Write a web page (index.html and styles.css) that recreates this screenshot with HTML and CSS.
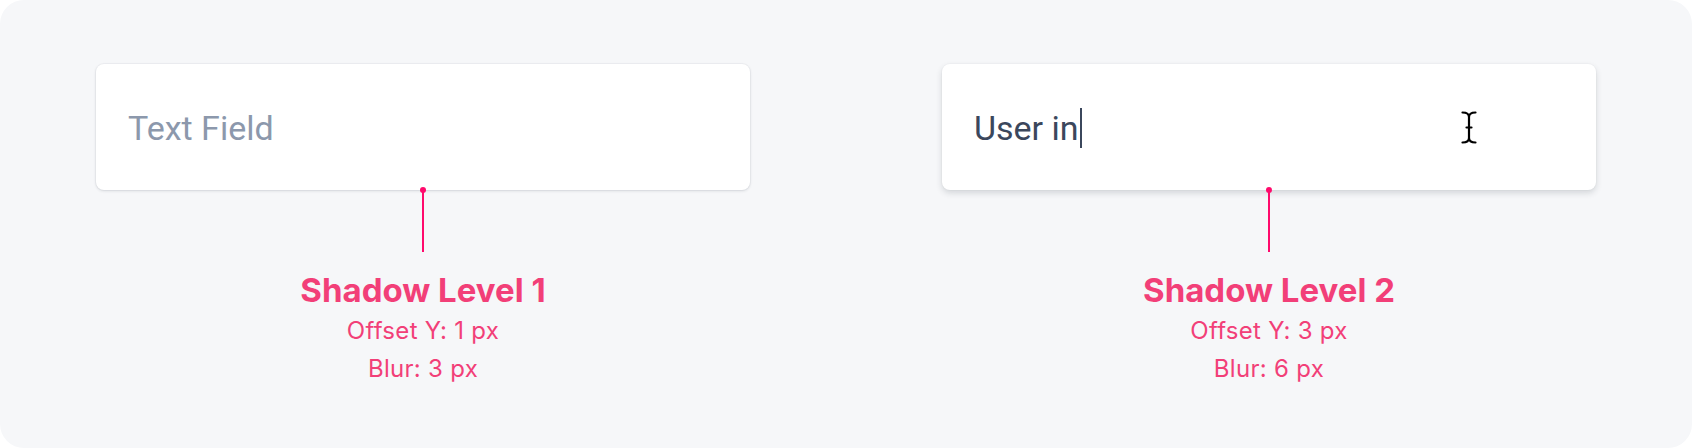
FILE: index.html
```html
<!DOCTYPE html>
<html lang="en">
<head>
<meta charset="utf-8">
<title>Shadow Levels</title>
<link rel="stylesheet" href="styles.css">
</head>
<body>
<main class="panel">
  <section class="column">
    <div class="field field-level-1">
      <span class="placeholder">Text Field</span>
    </div>
    <div class="connector"><span class="dot"></span></div>
    <h2 class="title">Shadow Level 1</h2>
    <p class="meta">Offset Y: 1 px</p>
    <p class="meta">Blur: 3 px</p>
  </section>
  <section class="column">
    <div class="field field-level-2">
      <span class="value">User in</span><span class="caret"></span>
      <svg class="ibeam" width="16" height="33" viewBox="0 0 16 33" aria-hidden="true">
        <path d="M1.5 1.5 Q8 1.5 8 6 Q8 1.5 14.5 1.5 M8 6 V27 M1.5 31.5 Q8 31.5 8 27 Q8 31.5 14.5 31.5 M5.5 16.5 H10.5" fill="none" stroke="#000" stroke-width="2.2" stroke-linecap="round"/>
      </svg>
    </div>
    <div class="connector"><span class="dot"></span></div>
    <h2 class="title">Shadow Level 2</h2>
    <p class="meta">Offset Y: 3 px</p>
    <p class="meta">Blur: 6 px</p>
  </section>
</main>
</body>
</html>
```

FILE: styles.css
```css
* { box-sizing: border-box; }

html, body {
  margin: 0;
  padding: 0;
  background: #ffffff;
}

.panel {
  width: 1692px;
  height: 448px;
  background: #f6f7f9;
  border-radius: 24px;
  padding: 64px 96px 0;
  display: grid;
  grid-template-columns: 654px 654px;
  column-gap: 192px;
  align-items: start;
}

.column {
  display: flex;
  flex-direction: column;
  align-items: center;
}

.field {
  position: relative;
  width: 654px;
  height: 126px;
  background: #ffffff;
  border-radius: 8px;
  display: flex;
  align-items: center;
  padding: 2px 32px 0;
  font-family: Roboto, "Liberation Sans", sans-serif;
  font-size: 34px;
}

.field-level-1 {
  box-shadow: 0 1px 3px rgba(30, 41, 59, 0.14), 0 0 0 1px rgba(30, 41, 59, 0.03);
}

.field-level-2 {
  box-shadow: 0 3px 6px rgba(30, 41, 59, 0.16), 0 0 0 1px rgba(30, 41, 59, 0.02);
}

.placeholder {
  color: #8c98ac;
}

.value {
  color: #3b475c;
}

.caret {
  display: inline-block;
  width: 2px;
  height: 40px;
  margin-left: 1px;
  background: #3b475c;
}

.ibeam {
  position: absolute;
  left: 519px;
  top: 47px;
}

.connector {
  position: relative;
  width: 2px;
  height: 62px;
  background: #ff0a6c;
}

.dot {
  position: absolute;
  left: -2px;
  top: -3px;
  width: 6px;
  height: 6px;
  border-radius: 50%;
  background: #ff0a6c;
}

.title {
  margin: 18px 0 0;
  font-family: Inter, "Liberation Sans", sans-serif;
  font-weight: 700;
  font-size: 33px;
  line-height: 40px;
  color: #f23f78;
}

.meta {
  margin: 0;
  font-family: Inter, "Liberation Sans", sans-serif;
  font-weight: 400;
  font-size: 24px;
  line-height: 38px;
  color: #f23f78;
  letter-spacing: 0.3px;
}

.title + .meta { margin-top: 2px; }
```
